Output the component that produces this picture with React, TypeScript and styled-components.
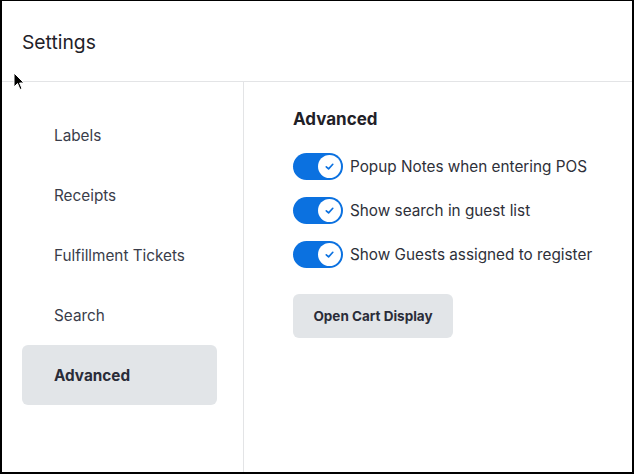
import React from "react";
import styled, { createGlobalStyle } from "styled-components";

const GlobalStyle = createGlobalStyle`
  html, body {
    margin: 0;
    padding: 0;
    background: #fff;
  }
  * {
    box-sizing: border-box;
  }
`;

const Frame = styled.div`
  position: relative;
  width: 634px;
  height: 474px;
  border: 2px solid #000;
  border-top-width: 1px;
  display: flex;
  flex-direction: column;
  font-family: "Inter", "Noto Sans", sans-serif;
  color: #2e3039;
  overflow: hidden;
`;

const Header = styled.header`
  height: 81px;
  flex-shrink: 0;
  display: flex;
  align-items: center;
  padding: 2px 0 0 20px;
  border-bottom: 1px solid #e3e4e6;
  font-size: 19.3px;
  color: #1f2128;
`;

const Body = styled.div`
  flex: 1;
  display: flex;
`;

const Sidebar = styled.nav`
  width: 242px;
  flex-shrink: 0;
  border-right: 1px solid #e3e4e6;
  padding: 23px 0 0 20px;
  display: flex;
  flex-direction: column;
`;

const NavItem = styled.div<{ $active?: boolean }>`
  width: 195px;
  height: 60px;
  display: flex;
  align-items: center;
  padding-left: 32px;
  border-radius: 6px;
  font-size: 15.3px;
  font-weight: ${(p) => (p.$active ? 700 : 400)};
  color: ${(p) => (p.$active ? "#2a2c38" : "#3a3d4a")};
  background: ${(p) => (p.$active ? "#e2e5e8" : "transparent")};
`;

const Content = styled.section`
  flex: 1;
  padding: 25px 0 0 49px;
  display: flex;
  flex-direction: column;
  align-items: flex-start;
`;

const Heading = styled.h2`
  margin: 0 0 13px;
  font-size: 17px;
  line-height: 24px;
  font-weight: 700;
  color: #1f2128;
`;

const ToggleRow = styled.label`
  height: 44px;
  display: flex;
  align-items: center;
  gap: 7px;
  font-size: 15.3px;
  color: #2e3039;
`;

const Track = styled.span<{ $on?: boolean }>`
  width: 50px;
  height: 27px;
  border-radius: 14px;
  background: ${(p) => (p.$on ? "#0b71e0" : "#c8ccd2")};
  display: flex;
  align-items: center;
  justify-content: ${(p) => (p.$on ? "flex-end" : "flex-start")};
  padding: 0 2px;
`;

const Knob = styled.span`
  width: 23px;
  height: 23px;
  border-radius: 50%;
  background: #fff;
  display: flex;
  align-items: center;
  justify-content: center;
`;

const Button = styled.button`
  margin-top: 18px;
  width: 160px;
  height: 44px;
  border: none;
  border-radius: 6px;
  background: #e2e5e8;
  font-family: inherit;
  font-size: 13.5px;
  font-weight: 700;
  color: #2a2c38;
`;

const Cursor = styled.svg`
  position: absolute;
  left: 11px;
  top: 71px;
`;

const Check = () => (
  <svg width="11" height="11" viewBox="0 0 12 12" fill="none">
    <path
      d="M2.5 6.3 L5 8.6 L9.6 3.6"
      stroke="#0b71e0"
      strokeWidth="1.8"
      strokeLinecap="round"
      strokeLinejoin="round"
    />
  </svg>
);

const Toggle = ({ on, label }: { on: boolean; label: string }) => (
  <ToggleRow>
    <Track $on={on}>
      <Knob>{on && <Check />}</Knob>
    </Track>
    {label}
  </ToggleRow>
);

const navItems = ["Labels", "Receipts", "Fulfillment Tickets", "Search", "Advanced"];

const toggles = [
  "Popup Notes when entering POS",
  "Show search in guest list",
  "Show Guests assigned to register",
];

export default function App() {
  return (
    <>
      <GlobalStyle />
      <Frame>
        <Header>Settings</Header>
        <Body>
          <Sidebar>
            {navItems.map((item) => (
              <NavItem key={item} $active={item === "Advanced"}>
                {item}
              </NavItem>
            ))}
          </Sidebar>
          <Content>
            <Heading>Advanced</Heading>
            {toggles.map((t) => (
              <Toggle key={t} on label={t} />
            ))}
            <Button>Open Cart Display</Button>
          </Content>
        </Body>
        <Cursor width="12" height="20" viewBox="0 0 12 20">
          <path
            d="M1 1 L1 15 L4.5 11.5 L7 17.5 L9 16.6 L6.6 11 L11 11 Z"
            fill="#000"
            stroke="#fff"
            strokeWidth="1"
          />
        </Cursor>
      </Frame>
    </>
  );
}
